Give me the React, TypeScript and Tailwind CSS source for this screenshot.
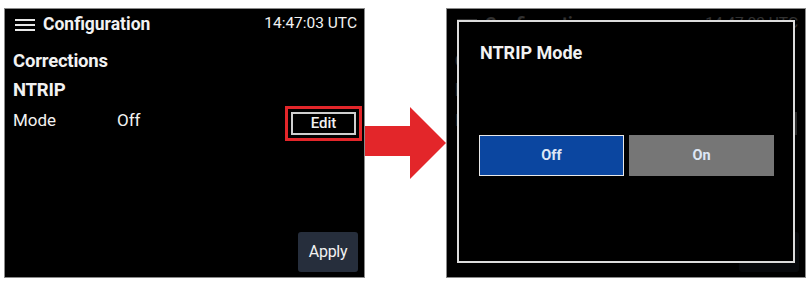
import React from "react";

const font = { fontFamily: "Roboto, 'Liberation Sans', sans-serif" };

function Screen({ showEditHighlight }: { showEditHighlight: boolean }) {
  return (
    <div className="flex h-full flex-col text-[#f2f2f2]">
      <div className="flex h-[30px] items-center justify-between pl-[10px] pr-[7px]">
        <div className="flex items-center gap-[8px]">
          <svg width="20" height="12" viewBox="0 0 20 12" className="mt-[1px]">
            <rect x="0" y="0" width="20" height="2" fill="#e8e8e8" />
            <rect x="0" y="5" width="20" height="2" fill="#e8e8e8" />
            <rect x="0" y="10" width="20" height="2" fill="#e8e8e8" />
          </svg>
          <span className="text-[17.5px] font-bold">Configuration</span>
        </div>
        <span className="text-[15.5px]">14:47:03 UTC</span>
      </div>
      <div className="mt-[9px] h-[26px] pl-[8px] text-[18.5px] font-bold leading-[26px] tracking-[-0.2px]">
        Corrections
      </div>
      <div className="mt-[3px] h-[26px] pl-[8px] text-[18.5px] font-bold leading-[26px] tracking-[-0.2px]">
        NTRIP
      </div>
      <div className="flex h-[36px] items-center pl-[8px] pr-[2px] text-[17px]">
        <span className="w-[104px]">Mode</span>
        <span>Off</span>
        <div className="ml-auto mt-[4px]">
          <div
            className={
              showEditHighlight
                ? "border-[3px] border-[#e3262a] p-[3px]"
                : "border-[3px] border-transparent p-[3px]"
            }
          >
            <div className="flex h-[23px] w-[65px] items-center justify-center border-2 border-[#cfcfcf] bg-black text-[15px] font-medium">
              Edit
            </div>
          </div>
        </div>
      </div>
      <div className="mt-auto mb-[5px] mr-[6px] flex h-[40px] w-[60px] items-center justify-center self-end rounded-[3px] bg-[#262e3c] text-[16px] tracking-[-0.3px]">
        Apply
      </div>
    </div>
  );
}

export default function App() {
  return (
    <div className="h-[285px] w-[812px] bg-white" style={font}>
      <div className="flex pt-[8px] pl-[4px]">
        <div className="h-[270px] w-[361px] border border-[#8a8a8a] bg-black">
          <Screen showEditHighlight={true} />
        </div>
        <div className="h-[270px] w-[81px]">
          <svg width="81" height="270" viewBox="0 0 81 270">
            <polygon
              points="0,118 45,118 45,99 81,135 45,171 45,148 0,148"
              fill="#e3262a"
            />
          </svg>
        </div>
        <div className="relative h-[270px] w-[360px] border border-[#8a8a8a] bg-black">
          <div className="h-full opacity-20">
            <Screen showEditHighlight={false} />
          </div>
          <div className="absolute left-[10px] top-[11px] h-[243px] w-[338px] border-2 border-[#dcdcdc] bg-black">
            <div className="pl-[21px] pt-[20px] text-[18px] font-bold leading-[22px] text-[#f2f2f2]">
              NTRIP Mode
            </div>
            <div className="mt-[71px] flex gap-[5px] pl-[20px]">
              <div className="flex h-[41px] w-[145px] items-center justify-center border border-[#e8e8e8] bg-[#0b46a0] text-[14.5px] font-bold text-[#dde6f5]">
                Off
              </div>
              <div className="flex h-[41px] w-[145px] items-center justify-center bg-[#767676] text-[14.5px] font-bold text-[#dde6f5]">
                On
              </div>
            </div>
          </div>
        </div>
      </div>
    </div>
  );
}
